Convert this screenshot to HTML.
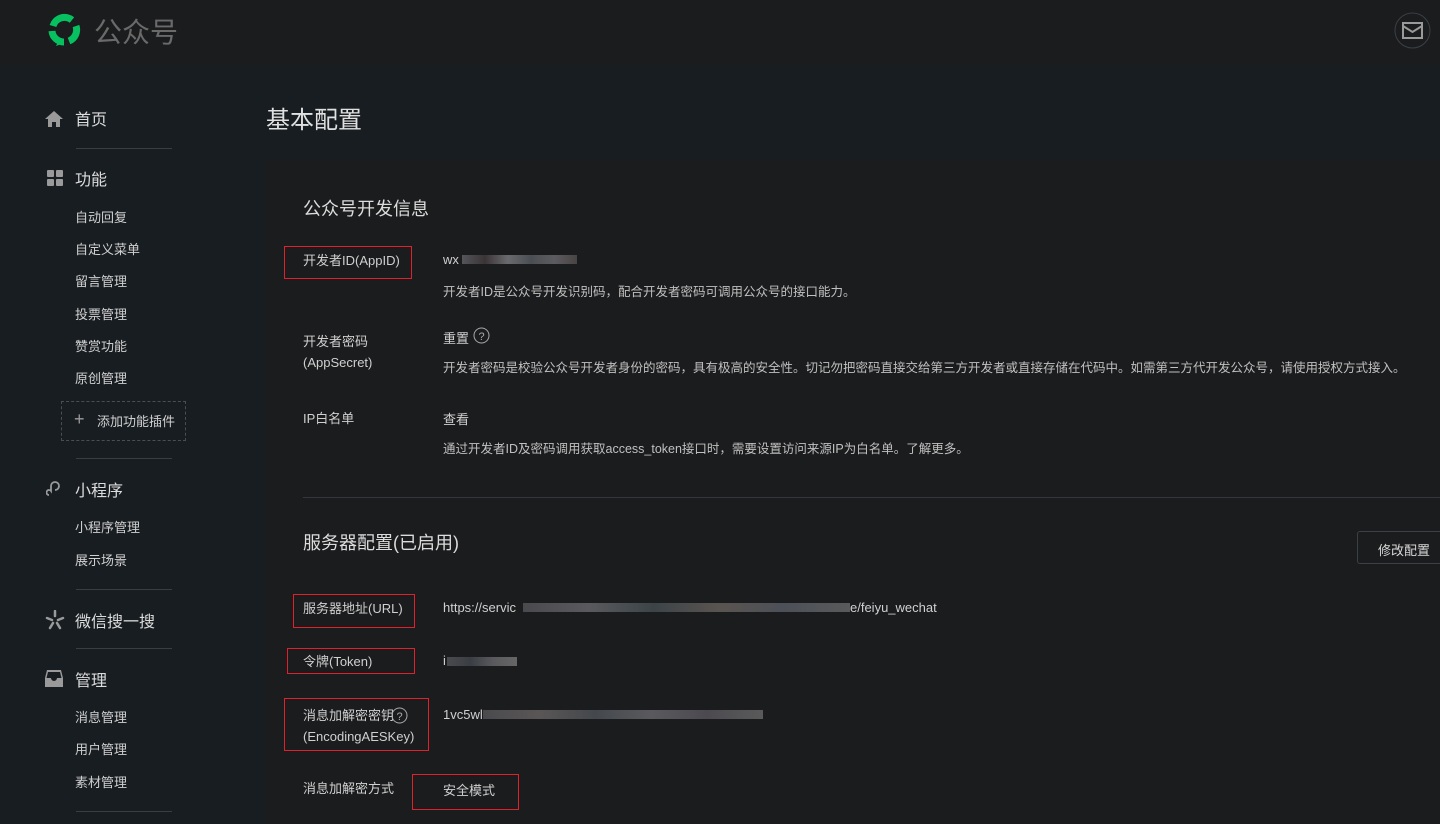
<!DOCTYPE html>
<html><head><meta charset="utf-8"><style>
*{margin:0;padding:0;box-sizing:border-box}
body{width:1440px;height:824px;overflow:hidden;background:#181d21;font-family:"Liberation Sans","Noto Sans CJK SC",sans-serif;color:#d6d6d6;position:relative}
.a{position:absolute;white-space:nowrap}
.hdr{position:absolute;left:0;top:0;width:1440px;height:66px;background:#1b1c1e}
.dv{position:absolute;left:76px;width:96px;height:1px;background:#3a3e42}
.m{font-size:16px;left:75px;color:#dcdcdc}
.s{font-size:13px;left:75px;color:#d0d0d0}
.card{position:absolute;left:265px;top:160px;width:1175px;height:664px;background:#1b1c1e}
.l{font-size:13px;left:303px;color:#d0d0d0;line-height:21px}
.v{font-size:13px;left:443px;color:#d0d0d0}
.d{font-size:12.5px;left:443px;color:#c0c0c0}
.rb{position:absolute;border:1px solid #e0202a}
.px{position:absolute;height:9px}
</style></head><body>
<div class="hdr"></div>
<svg class="a" style="left:45px;top:11px" width="38" height="38" viewBox="0 0 38 38">
<g fill="none" stroke="#07c160" stroke-width="7">
<path d="M8 15A12 12 0 0 1 27 9"/>
<path d="M31 15A12 12 0 0 1 24 30"/>
<path d="M19 31A12 12 0 0 1 7 20"/>
</g>
<path d="M14 29l-3 6 8-3z" fill="#07c160"/>
</svg>
<div class="a" style="left:94px;top:11px;font-size:28px;color:#6a6a6a">公众号</div>
<svg class="a" style="left:1394px;top:12px" width="37" height="37" viewBox="0 0 37 37"><circle cx="18.5" cy="18.5" r="17.5" fill="none" stroke="#3a4046"/><rect x="9" y="11" width="19" height="15" fill="none" stroke="#9a9a9a" stroke-width="2"/><path d="M9 14l9.5 6 9.5-6" fill="none" stroke="#9a9a9a" stroke-width="2"/></svg>

<svg class="a" style="left:45px;top:110px" width="18" height="18" viewBox="0 0 18 18"><path d="M9 1L0 9h3v8h4v-5h4v5h4V9h3z" fill="#9a9a9a"/></svg>
<div class="a m" style="top:106px">首页</div>
<div class="dv" style="top:148px"></div>
<svg class="a" style="left:47px;top:170px" width="16" height="16"><rect width="7" height="7" rx="1" fill="#9a9a9a"/><rect x="9" width="7" height="7" rx="1" fill="#9a9a9a"/><rect y="9" width="7" height="7" rx="1" fill="#9a9a9a"/><rect x="9" y="9" width="7" height="7" rx="1" fill="#9a9a9a"/></svg>
<div class="a m" style="top:166px">功能</div>
<div class="a s" style="top:207px">自动回复</div>
<div class="a s" style="top:239px">自定义菜单</div>
<div class="a s" style="top:271px">留言管理</div>
<div class="a s" style="top:304px">投票管理</div>
<div class="a s" style="top:336px">赞赏功能</div>
<div class="a s" style="top:368px">原创管理</div>
<div class="a" style="left:61px;top:401px;width:125px;height:40px;border:1px dashed #4a4e52"></div>
<div class="a" style="left:74px;top:409px;font-size:18px;color:#9a9a9a">+</div>
<div class="a" style="left:97px;top:411px;font-size:13px;color:#d0d0d0">添加功能插件</div>
<div class="dv" style="top:458px"></div>
<svg class="a" style="left:46px;top:480px" width="18" height="18" viewBox="0 0 18 18"><path d="M3 15a2.5 2.5 0 1 1 2-4V6a4 4 0 1 1 4 4" fill="none" stroke="#9a9a9a" stroke-width="1.8"/></svg>
<div class="a m" style="top:477px">小程序</div>
<div class="a s" style="top:517px">小程序管理</div>
<div class="a s" style="top:550px">展示场景</div>
<div class="dv" style="top:589px"></div>
<svg class="a" style="left:45px;top:610px" width="20" height="20" viewBox="0 0 20 20"><g stroke="#9a9a9a" stroke-width="2.5" stroke-linecap="round"><path d="M10 1v5M2 8l5 2M18 8l-5 2M8 13l-3 5M12 13l3 5"/></g></svg>
<div class="a m" style="top:608px">微信搜一搜</div>
<div class="dv" style="top:648px"></div>
<svg class="a" style="left:45px;top:670px" width="18" height="17" viewBox="0 0 18 17"><path d="M2 0h14l2 8v9H0V8z" fill="#9a9a9a"/><path d="M3 2h12l1.5 6H12a3 3 0 0 1-6 0H1.5z" fill="#181d21"/></svg>
<div class="a m" style="top:667px">管理</div>
<div class="a s" style="top:707px">消息管理</div>
<div class="a s" style="top:739px">用户管理</div>
<div class="a s" style="top:772px">素材管理</div>
<div class="dv" style="top:811px"></div>

<div class="a" style="left:266px;top:100px;font-size:24px;color:#e0e0e0">基本配置</div>
<div class="card"></div>
<div class="a" style="left:303px;top:195px;font-size:18px;color:#dcdcdc">公众号开发信息</div>

<div class="a l" style="top:250px">开发者ID(AppID)</div>
<div class="a v" style="top:252px">wx</div>
<div class="px" style="left:462px;top:255px;width:115px;background:linear-gradient(90deg,#55555a,#3a3436 20%,#6a6a6e 40%,#4a4e52 60%,#5c5c60 80%,#4a4444)"></div>
<div class="a d" style="top:281px">开发者ID是公众号开发识别码，配合开发者密码可调用公众号的接口能力。</div>

<div class="a l" style="top:331px">开发者密码<br>(AppSecret)</div>
<div class="a v" style="top:328px">重置</div>
<svg class="a" style="left:473px;top:327px" width="17" height="17"><circle cx="8.5" cy="8.5" r="7.5" fill="none" stroke="#aaa"/><text x="8.5" y="13" font-size="11" fill="#aaa" text-anchor="middle" font-family="Liberation Sans">?</text></svg>
<div class="a d" style="top:357px">开发者密码是校验公众号开发者身份的密码，具有极高的安全性。切记勿把密码直接交给第三方开发者或直接存储在代码中。如需第三方代开发公众号，请使用授权方式接入。</div>

<div class="a l" style="top:408px">IP白名单</div>
<div class="a v" style="top:409px">查看</div>
<div class="a d" style="top:438px">通过开发者ID及密码调用获取access_token接口时，需要设置访问来源IP为白名单。了解更多。</div>

<div class="a" style="left:303px;top:497px;width:1137px;height:1px;background:#33373b"></div>
<div class="a" style="left:303px;top:529px;font-size:18px;color:#dcdcdc">服务器配置(已启用)</div>
<div class="a" style="left:1357px;top:531px;width:95px;height:33px;border:1px solid #3c4044;border-radius:3px;font-size:13px;color:#d8d8d8;padding:8px 0 0 20px">修改配置</div>

<div class="a l" style="top:598px">服务器地址(URL)</div>
<div class="a v" style="top:600px">https://servic</div>
<div class="px" style="left:523px;top:603px;width:327px;background:linear-gradient(90deg,#4a4a4e,#5a5a5e 20%,#3c4448 40%,#5a5450 60%,#4c5058 80%,#5a5a5a)"></div>
<div class="a v" style="left:850px;top:600px">e/feiyu_wechat</div>

<div class="a l" style="top:651px">令牌(Token)</div>
<div class="a v" style="top:653px">i</div>
<div class="px" style="left:447px;top:657px;width:70px;background:linear-gradient(90deg,#4a4a4e,#3a3e44,#5a5a5e,#666)"></div>

<div class="a l" style="top:705px">消息加解密密钥<br>(EncodingAESKey)</div>
<svg class="a" style="left:391px;top:707px" width="17" height="17"><circle cx="8.5" cy="8.5" r="7.5" fill="none" stroke="#aaa"/><text x="8.5" y="13" font-size="11" fill="#aaa" text-anchor="middle" font-family="Liberation Sans">?</text></svg>
<div class="a v" style="top:707px">1vc5wl</div>
<div class="px" style="left:483px;top:710px;width:280px;background:linear-gradient(90deg,#4a4a4e,#5a5656 20%,#44484c 40%,#5a5a5e 60%,#4c4a50 80%,#5a5a5a)"></div>

<div class="a l" style="top:778px">消息加解密方式</div>
<div class="a v" style="top:780px">安全模式</div>

<div class="rb" style="left:284px;top:246px;width:128px;height:33px"></div>
<div class="rb" style="left:293px;top:594px;width:122px;height:34px"></div>
<div class="rb" style="left:287px;top:648px;width:128px;height:26px"></div>
<div class="rb" style="left:284px;top:698px;width:145px;height:53px"></div>
<div class="rb" style="left:412px;top:774px;width:107px;height:36px"></div>
</body></html>
